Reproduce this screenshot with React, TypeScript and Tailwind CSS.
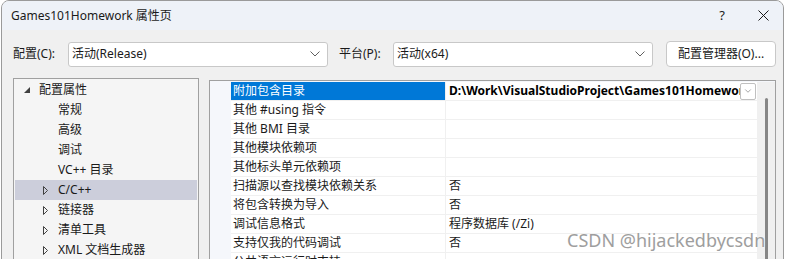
import { ChevronDown } from "lucide-react";

// Visual Studio property page dialog (C/C++ > General)

const treeItems = [
  { label: "配置属性", level: 0, expanded: true },
  { label: "常规", level: 1 },
  { label: "高级", level: 1 },
  { label: "调试", level: 1 },
  { label: "VC++ 目录", level: 1 },
  { label: "C/C++", level: 1, collapsed: true, selected: true },
  { label: "链接器", level: 1, collapsed: true },
  { label: "清单工具", level: 1, collapsed: true },
  { label: "XML 文档生成器", level: 1, collapsed: true },
];

const props = [
  { name: "附加包含目录", value: "D:\\Work\\VisualStudioProject\\Games101Homework\\include", selected: true },
  { name: "其他 #using 指令", value: "" },
  { name: "其他 BMI 目录", value: "" },
  { name: "其他模块依赖项", value: "" },
  { name: "其他标头单元依赖项", value: "" },
  { name: "扫描源以查找模块依赖关系", value: "否" },
  { name: "将包含转换为导入", value: "否" },
  { name: "调试信息格式", value: "程序数据库 (/Zi)" },
  { name: "支持仅我的代码调试", value: "否" },
  { name: "公共语言运行时支持", value: "" },
];

const Chevron = () => (
  <svg width="10" height="6" viewBox="0 0 10 6" className="shrink-0">
    <path d="M0.5 0.5 L5 5 L9.5 0.5" fill="none" stroke="#606060" strokeWidth="1" />
  </svg>
);

const Select = ({ value }: { value: string }) => (
  <div className="w-[260px] h-[25px] bg-white border border-[#c8c8c8] rounded-[3px] flex items-center pl-[3px] pr-[7px]">
    <span className="flex-1 truncate">{value}</span>
    <Chevron />
  </div>
);

const App = () => {
  return (
    <div
      className="w-[786px] h-[259px] overflow-hidden bg-white relative text-[12px] text-[#1a1a1a]"
      style={{ fontFamily: '"Noto Sans", "Noto Sans CJK SC", sans-serif' }}
    >
      <div className="ml-[1px] w-[783px] h-[270px] border border-[#9a9a9a] rounded-t-[8px] overflow-hidden bg-[#f0f0f0] flex flex-col">
        {/* Title bar */}
        <div className="h-[29px] bg-[#eef2f8] flex items-center pl-[9px] pr-[14px] shrink-0">
          <span className="flex-1">Games101Homework 属性页</span>
          <span className="text-[13px] mr-[33px]">?</span>
          <svg width="11" height="11" viewBox="0 0 11 11">
            <path d="M0.5 0.5 L10.5 10.5 M10.5 0.5 L0.5 10.5" stroke="#1a1a1a" strokeWidth="1" />
          </svg>
        </div>

        {/* Configuration row */}
        <div className="h-[48px] shrink-0 flex items-center pl-[11px]">
          <span className="w-[55px]">配置(C):</span>
          <Select value="活动(Release)" />
          <span className="w-[54px] ml-[11px]">平台(P):</span>
          <Select value="活动(x64)" />
          <div className="ml-[13px] w-[110px] h-[26px] bg-white border border-[#c8c8c8] rounded-[4px] flex items-center justify-center">
            配置管理器(O)...
          </div>
        </div>

        {/* Panels */}
        <div className="flex flex-1 min-h-0">
          <div className="ml-[11px] w-[186px] border border-[#a0a0a0] bg-[#f5f5f5] p-[1px]">
            {treeItems.map((item) => (
              <div
                key={item.label}
                className={`h-[20px] flex items-center ${item.selected ? "bg-[#cccedb]" : ""}`}
              >
                <div className={`${item.level === 0 ? "w-[24px]" : "w-[43px]"} flex justify-end pr-[3px]`}>
                  {item.expanded && (
                    <svg width="6" height="6" viewBox="0 0 6 6" className="mr-[6px]">
                      <path d="M6 0 L6 6 L0 6 Z" fill="#404040" />
                    </svg>
                  )}
                  {item.collapsed && (
                    <svg width="6" height="9" viewBox="0 0 6 9" className="mr-[6px]">
                      <path d="M0.5 0.5 L4.5 4.5 L0.5 8.5 Z" fill="none" stroke="#404040" strokeWidth="1" />
                    </svg>
                  )}
                </div>
                <span>{item.label}</span>
              </div>
            ))}
          </div>

          <div className="ml-[10px] mt-[2px] w-[567px] border border-[#a0a0a0] bg-[#f5f7fb] flex pt-[1px]">
            <div className="w-[21px] shrink-0" />
            <div className="w-[526px]">
              {props.map((p) => (
                <div key={p.name} className="h-[19px] flex bg-white border-b border-[#f0f0f0]">
                  <div
                    className={`w-[214px] shrink-0 pl-[2px] flex items-center ${
                      p.selected ? "bg-[#0078d7] text-white" : ""
                    }`}
                  >
                    {p.name}
                  </div>
                  <div className="flex-1 min-w-0 border-l border-[#f0f0f0] pl-[3px] flex items-center">
                    {p.selected ? (
                      <>
                        <span className="flex-1 font-bold whitespace-nowrap overflow-hidden text-black">
                          {p.value}
                        </span>
                        <div className="w-[16px] h-[17px] bg-white border border-[#c0c0c0] rounded-[2px] flex items-center justify-center mr-[1px]">
                          <ChevronDown size={10} color="#707070" strokeWidth={1.5} />
                        </div>
                      </>
                    ) : (
                      <span>{p.value}</span>
                    )}
                  </div>
                </div>
              ))}
            </div>
            {/* Scrollbar */}
            <div className="flex-1 bg-[#f0f0f0] flex flex-col pt-[16px]">
              <div className="ml-[8px] w-[3px] flex-1 bg-[#868686] rounded-t-[2px]" />
            </div>
          </div>
        </div>
      </div>

      {/* Watermark */}
      <div
        className="absolute left-[567px] top-[227px] text-[18px] text-[#9e9e9e] whitespace-nowrap"
        style={{ textShadow: "0 0 2px rgba(255,255,255,0.9)" }}
      >
        CSDN @hijackedbycsdn
      </div>
    </div>
  );
};

export default App;
